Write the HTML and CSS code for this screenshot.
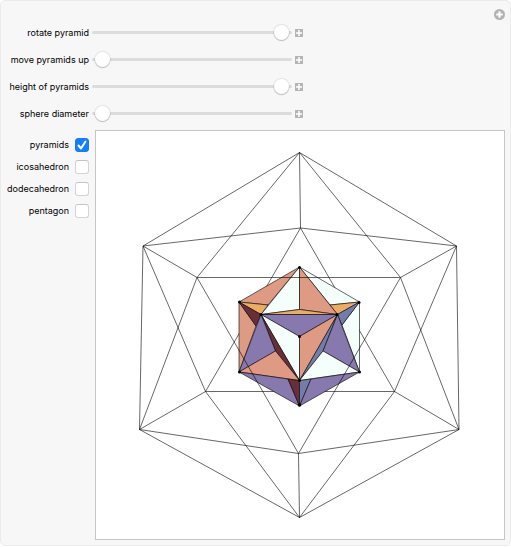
FILE: index.html
```html
<!DOCTYPE html>
<html lang="en">
<head>
<meta charset="utf-8">
<title>Pyramids on a dodecahedron</title>
<link rel="stylesheet" href="styles.css">
</head>
<body>
<main class="panel">
  <button class="menu" aria-label="Options"><svg viewBox="0 0 11 11"><circle cx="5.500" cy="5.500" r="5.500"/><path d="M5.500 2.300v6.400M2.300 5.500h6.400"/></svg></button>
  <div class="sliders">
    <div class="slider-row"><label for="rotate">rotate pyramid</label><input id="rotate" type="range" value="100"><button class="expand" aria-label="Expand rotate pyramid"><svg viewBox="0 0 8 8"><path d="M4 1v6M1 4h6"/></svg></button></div>
    <div class="slider-row"><label for="move">move pyramids up</label><input id="move" type="range" value="0"><button class="expand" aria-label="Expand move pyramids up"><svg viewBox="0 0 8 8"><path d="M4 1v6M1 4h6"/></svg></button></div>
    <div class="slider-row"><label for="height">height of pyramids</label><input id="height" type="range" value="100"><button class="expand" aria-label="Expand height of pyramids"><svg viewBox="0 0 8 8"><path d="M4 1v6M1 4h6"/></svg></button></div>
    <div class="slider-row"><label for="sphere">sphere diameter</label><input id="sphere" type="range" value="0"><button class="expand" aria-label="Expand sphere diameter"><svg viewBox="0 0 8 8"><path d="M4 1v6M1 4h6"/></svg></button></div>
  </div>
  <div class="content">
    <div class="checks">
      <div class="check-row"><label for="pyramids">pyramids</label><span class="box"><input id="pyramids" type="checkbox" checked><svg viewBox="0 0 14 14"><path d="M3.500 7.500L6 10.500L10.500 3.500"/></svg></span></div>
      <div class="check-row"><label for="icosahedron">icosahedron</label><span class="box"><input id="icosahedron" type="checkbox"></span></div>
      <div class="check-row"><label for="dodecahedron">dodecahedron</label><span class="box"><input id="dodecahedron" type="checkbox"></span></div>
      <div class="check-row"><label for="pentagon">pentagon</label><span class="box"><input id="pentagon" type="checkbox"></span></div>
    </div>
    <div class="view">
      <svg viewBox="96 131 408 408" role="img" aria-label="Star of pyramids inside a wireframe icosahedron">
        <g class="wire">
          <path d="M299.500 152.500L143 246L139.500 429.500L299.500 517.500L459 429.500L456.500 246Z"/>
          <path d="M299.500 152.500L300.500 228L143 246L205.500 391.500L300.500 228L456.500 246L394.500 391.500L300.500 228M205.500 391.500H394.500L459 429.500M205.500 391.500L139.500 429.500M205.500 391.500L299.500 517.500L394.500 391.500"/>
        </g>
        <g class="solid">
          <path class="salmon" d="M299.500 267L239 302L268 305Z"/>
          <path class="mint" d="M299.500 267L359.500 302L330 305Z"/>
          <path class="salmon" d="M239 302L256 326L239 372Z"/>
          <path class="mint" d="M359.500 302L342 325L359.500 372Z"/>
          <path class="orange" d="M239 302L268 305L261 314.500Z"/>
          <path class="orange" d="M359.500 302L330 305L337.500 314.500Z"/>
          <path class="dark" d="M239 302L261 314.500L256 326Z"/>
          <path class="blue" d="M359.500 302L337.500 314.500L342 325Z"/>
          <path class="mint" d="M299.500 267L261 314.500L299.500 309.500Z"/>
          <path class="salmon" d="M299.500 267L337.500 314.500L299.500 309.500Z"/>
          <path class="orange" d="M261 314.500L299.500 309.500L337.500 314.500Z"/>
          <path class="purple" d="M261 314.500H337.500L299.500 336.500Z"/>
          <path class="mint" d="M261 314.500L299.500 336.500V380.500Z"/>
          <path class="salmon" d="M337.500 314.500L299.500 336.500V380.500Z"/>
          <path class="dark" d="M261 314.500L299.500 380.500L275.500 351Z"/>
          <path class="blue" d="M337.500 314.500L299.500 380.500L323 351Z"/>
          <path class="purple" d="M261 314.500L239 372L275.500 351Z"/>
          <path class="purple" d="M337.500 314.500L359.500 372L323 351Z"/>
          <path class="salmon" d="M239 372L275.500 351L299.500 380.500Z"/>
          <path class="mint" d="M359.500 372L323 351L299.500 380.500Z"/>
          <path class="purple" d="M239 372L288 379L299.500 406Z"/>
          <path class="dark" d="M288 379L299.500 380.500V406Z"/>
          <path class="blue" d="M311 379L299.500 380.500V406Z"/>
          <path class="purple" d="M359.500 372L311 379L299.500 406Z"/>
        </g>
        <g class="tips"><circle cx="299.500" cy="267.500" r="1.500"/><circle cx="239.500" cy="302" r="1.500"/><circle cx="359" cy="302.500" r="1.500"/><circle cx="261" cy="314.500" r="1.500"/><circle cx="337" cy="314.500" r="1.500"/><circle cx="299.500" cy="336.500" r="1.500"/><circle cx="239.500" cy="372" r="1.500"/><circle cx="359.500" cy="372" r="1.500"/><circle cx="299.500" cy="380.500" r="1.500"/><circle cx="299.500" cy="405" r="1.800"/></g>
        <g class="wire">
          <path d="M299.500 152.500L197 277.500L143 246M197 277.500H400.500L299.500 152.500M400.500 277.500L456.500 246M197 277.500L139.500 429.500L298.500 453.500L197 277.500M400.500 277.500L459 429.500L298.500 453.500L400.500 277.500M298.500 453.500L299.500 517.500"/>
        </g>
      </svg>
    </div>
  </div>
</main>
</body>
</html>
```
FILE: styles.css
```css
* { box-sizing: border-box; }
body {
  margin: 0;
  background: #fff;
  color: #000;
  font: 9px/14px Inter, "Liberation Sans", sans-serif;
}
.panel {
  position: relative;
  padding: 18px 5px 5px 0;
  border: 1px solid #ebebeb;
  border-radius: 5px;
  background: #f7f7f7;
}
button { padding: 0; border: 0; }
button svg { display: block; width: 100%; height: 100%; fill: none; stroke: #fff; stroke-width: 2; }
.menu {
  position: absolute;
  top: 8px;
  right: 5px;
  width: 11px;
  height: 11px;
  background: none;
}
.menu circle { fill: #b2b2b2; stroke: none; }
.slider-row {
  display: grid;
  grid-template-columns: 88px 200px 8px;
  column-gap: 3px;
  align-items: center;
  height: 27px;
}
.slider-row label, .check-row label { text-align: right; white-space: nowrap; }
.slider-row label { justify-self: end; }
input { appearance: none; margin: 0; }
input[type="range"] {
  width: 100%;
  height: 3px;
  padding: 0 3px;
  border-radius: 2px;
  background: #dcdcdc;
}
input[type="range"]::-webkit-slider-runnable-track { height: 3px; }
input[type="range"]::-webkit-slider-thumb {
  appearance: none;
  width: 15px;
  height: 15px;
  margin-top: -6px;
  border-radius: 50%;
  background: #fff;
  box-shadow: 0 0 1px 1px #00000014, 0 1px 1px #00000030;
}
.expand { width: 8px; height: 8px; background: #b5b5b5; }
.expand svg { stroke-width: 1.5; }
.content {
  display: grid;
  grid-template-columns: 88px 1fr;
  column-gap: 6px;
  margin-top: 3px;
}
.checks { padding-top: 4px; }
.check-row {
  display: flex;
  justify-content: flex-end;
  align-items: center;
  gap: 6px;
  height: 22px;
}
.box { position: relative; display: block; width: 14px; height: 14px; }
.box input {
  display: block;
  width: 14px;
  height: 14px;
  border: 1px solid #d4d4d4;
  border-top-color: #c4c4c4;
  border-radius: 3px;
  background: #fff;
}
.box input:checked { border-color: #187cf5; background: #147efb; }
.box svg { position: absolute; inset: 0; fill: none; stroke: #fff; stroke-width: 2; stroke-linecap: round; stroke-linejoin: round; pointer-events: none; }
.view { border: 1px solid #c6c6c6; background: #fff; }
.view svg { display: block; width: 100%; height: auto; }
.wire { fill: none; stroke: #000; stroke-opacity: .75; stroke-width: .8; }
.solid { stroke: #000; stroke-opacity: .75; stroke-width: .8; stroke-linejoin: round; }
.tips { fill: #000; }
.salmon { fill: #df9a84; }
.mint { fill: #f4fffb; }
.orange { fill: #ebad65; }
.purple { fill: #8778ad; }
.dark { fill: #682f38; }
.blue { fill: #727daa; }
```
